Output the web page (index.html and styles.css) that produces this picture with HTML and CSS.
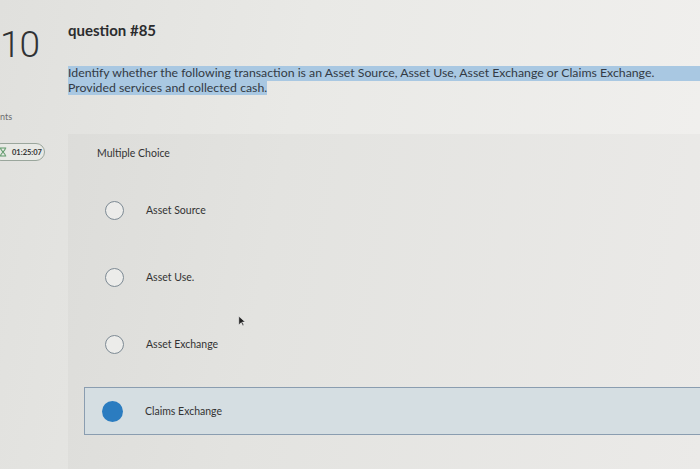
FILE: index.html
```html
<!DOCTYPE html>
<html>
<head>
<meta charset="utf-8">
<link rel="stylesheet" href="styles.css">
</head>
<body>
<div class="page">
  <aside class="side">
    <div class="qnum">10</div>
    <div class="points">nts</div>
    <div class="timer">
      <svg class="hourglass" viewBox="0 0 10 12" width="8" height="10"><path d="M1 1h8M1 11h8M2 1c0 3 3 4 3 5s-3 2-3 5M8 1c0 3-3 4-3 5s3 2 3 5" fill="none" stroke="#5f9a6a" stroke-width="1.3"/></svg>
      <span>01:25:07</span>
    </div>
  </aside>
  <main class="main">
    <h1 class="title">question #85</h1>
    <p class="prompt"><span class="sel-line">Identify whether the following transaction is an Asset Source, Asset Use, Asset Exchange or Claims Exchange.</span><span class="sel">Provided services and collected cash.</span></p>
    <section class="panel">
      <div class="kind">Multiple Choice</div>
      <div class="options">
        <div class="option"><span class="radio"></span><span class="label">Asset Source</span></div>
        <div class="option"><span class="radio"></span><span class="label">Asset Use.</span></div>
        <div class="option"><span class="radio"></span><span class="label">Asset Exchange</span></div>
        <div class="option selected"><span class="radio"></span><span class="label">Claims Exchange</span></div>
      </div>
    </section>
  </main>
</div>
<svg class="cursor" viewBox="0 0 10 14" width="8" height="12"><path d="M1 1v11l3-3 2 4 1.5-.7-2-4H9z" fill="#222" stroke="#fff" stroke-width=".6"/></svg>
</body>
</html>
```

FILE: styles.css
```css
html, body {
  margin: 0;
  padding: 0;
}
body {
  width: 700px;
  height: 469px;
  overflow: hidden;
  background: linear-gradient(100deg, #e0e0dd 0%, #e9e9e6 40%, #f1f0ee 100%);
  font-family: Lato, "Open Sans", sans-serif;
  color: #2e2f31;
  position: relative;
}
.page {
  display: grid;
  grid-template-columns: 68px 1fr;
  height: 469px;
}
.side {
  padding-top: 26px;
  overflow: hidden;
}
.qnum {
  font-family: Roboto, sans-serif;
  font-size: 37px;
  line-height: 38px;
  color: #303234;
  margin-left: 0;
  font-weight: 300;
  letter-spacing: -1px;
}
.points {
  margin-top: 48px;
  font-size: 9px;
  line-height: 10px;
  color: #6a6c6e;
}
.timer {
  margin-top: 21px;
  margin-left: -8px;
  width: 53px;
  height: 18px;
  box-sizing: border-box;
  border: 1px solid #9aa69c;
  border-radius: 9px;
  display: flex;
  align-items: center;
  gap: 5px;
  padding-left: 6px;
  font-size: 7.5px;
  font-weight: 700;
  color: #333;
  background: #e8e9e5;
}
.hourglass { flex: none; }
.main {
  padding-top: 20px;
  display: flex;
  flex-direction: column;
}
.title {
  margin: 0;
  font-size: 15px;
  line-height: 20px;
  font-weight: 700;
  color: #2b2c2e;
}
.prompt {
  margin: 26px 0 0;
  font-size: 12.3px;
  line-height: 14.5px;
  color: #333a44;
}
.sel-line {
  display: block;
  background: #a9c8e2;
}
.sel {
  background: #a9c8e2;
}
.panel {
  margin-top: 39px;
  background: rgba(0, 0, 0, 0.022);
  padding: 12px 0 0 0;
  flex: 1;
}
.kind {
  padding-left: 29px;
  font-size: 10.5px;
  line-height: 14px;
  color: #333;
}
.options {
  margin-top: 26px;
  padding-left: 16px;
  display: flex;
  flex-direction: column;
  gap: 19px;
}
.option {
  height: 48px;
  box-sizing: border-box;
  border: 1px solid transparent;
  display: flex;
  align-items: center;
  padding-left: 20px;
  gap: 22px;
  font-size: 10.5px;
  color: #333;
}
.radio {
  width: 19px;
  height: 19px;
  box-sizing: border-box;
  border-radius: 50%;
  border: 1.5px solid #7d8a94;
  background: #ececea;
  flex: none;
}
.option.selected {
  background: #d5dee2;
  border-color: #8a9db0;
  border-right: none;
  padding-left: 17px;
}
.option.selected .radio {
  width: 21px;
  height: 21px;
  border: none;
  background: #2b7cc0;
}
.cursor {
  position: absolute;
  left: 238px;
  top: 315px;
}
```
